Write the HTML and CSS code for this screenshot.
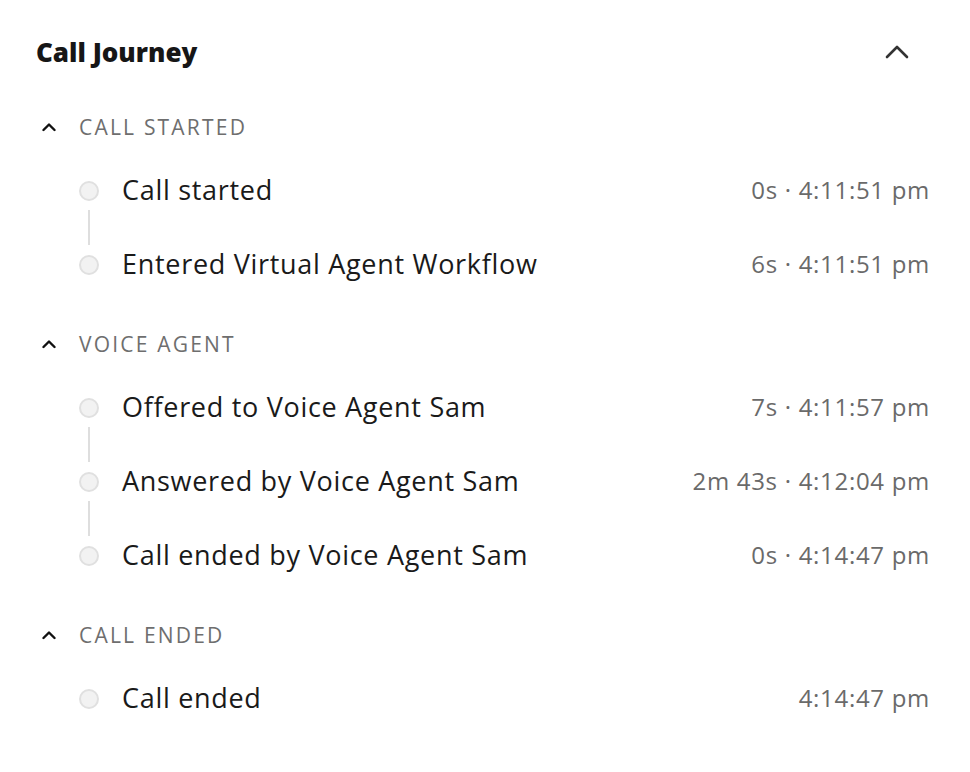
FILE: index.html
```html
<!DOCTYPE html>
<html lang="en">
<head>
  <meta charset="UTF-8" />
  <title>Call Journey</title>
  <link rel="stylesheet" href="styles.css">
</head>
<body>
<div class="journey">
  <div class="journey-header">
    <h2>Call Journey</h2>
    <button class="collapse-btn" aria-label="Collapse">
      <svg width="24" height="14" viewBox="0 0 24 14"><polyline points="2,12 12,2 22,12" fill="none" stroke="#333" stroke-width="2.6" stroke-linecap="round" stroke-linejoin="round"/></svg>
    </button>
  </div>

  <!-- Call started -->
  <div class="section">
    <div class="section-title">
      <svg class="chev" width="14" height="10" viewBox="0 0 14 10"><polyline points="1.5,8 7,2.5 12.5,8" fill="none" stroke="#111" stroke-width="2.4" stroke-linecap="round" stroke-linejoin="round"/></svg>
      <span>CALL STARTED</span>
    </div>
    <div class="event">
      <span class="dot"></span>
      <span class="event-name">Call started</span>
      <span class="event-time">0s · 4:11:51 pm</span>
    </div>
    <div class="event linked">
      <span class="dot"></span>
      <span class="event-name">Entered Virtual Agent Workflow</span>
      <span class="event-time">6s · 4:11:51 pm</span>
    </div>
  </div>

  <!-- Voice agent -->
  <div class="section">
    <div class="section-title">
      <svg class="chev" width="14" height="10" viewBox="0 0 14 10"><polyline points="1.5,8 7,2.5 12.5,8" fill="none" stroke="#111" stroke-width="2.4" stroke-linecap="round" stroke-linejoin="round"/></svg>
      <span>VOICE AGENT</span>
    </div>
    <div class="event">
      <span class="dot"></span>
      <span class="event-name">Offered to Voice Agent Sam</span>
      <span class="event-time">7s · 4:11:57 pm</span>
    </div>
    <div class="event linked">
      <span class="dot"></span>
      <span class="event-name">Answered by Voice Agent Sam</span>
      <span class="event-time">2m 43s · 4:12:04 pm</span>
    </div>
    <div class="event linked">
      <span class="dot"></span>
      <span class="event-name">Call ended by Voice Agent Sam</span>
      <span class="event-time">0s · 4:14:47 pm</span>
    </div>
  </div>

  <!-- Call ended -->
  <div class="section">
    <div class="section-title">
      <svg class="chev" width="14" height="10" viewBox="0 0 14 10"><polyline points="1.5,8 7,2.5 12.5,8" fill="none" stroke="#111" stroke-width="2.4" stroke-linecap="round" stroke-linejoin="round"/></svg>
      <span>CALL ENDED</span>
    </div>
    <div class="event">
      <span class="dot"></span>
      <span class="event-name">Call ended</span>
      <span class="event-time">4:14:47 pm</span>
    </div>
  </div>
</div>
</body>
</html>
```

FILE: styles.css
```css
body {
  margin: 0;
  font-family: 'Open Sans', 'Noto Sans', sans-serif;
  background: #fff;
  color: #1a1a1a;
}
.journey {
  width: 970px;
  box-sizing: border-box;
  padding: 36px 40px 0 36px;
}
.journey-header {
  display: flex;
  justify-content: space-between;
  align-items: center;
  height: 32px;
}
.journey-header h2 {
  margin: 0;
  font-size: 26px;
  line-height: 32px;
  font-weight: 800;
  color: #161616;
  letter-spacing: 0;
}
.collapse-btn {
  background: none;
  border: none;
  padding: 0;
  margin-right: 21px;
  width: 24px;
  height: 14px;
  display: flex;
  cursor: pointer;
}
.section {
  margin-top: 47px;
}
.section + .section {
  margin-top: 30px;
}
.section-title {
  display: flex;
  align-items: center;
  height: 24px;
  margin-bottom: 15px;
  color: #6e6e6e;
  font-size: 21px;
  letter-spacing: 2.2px;
}
.section-title .chev {
  margin-left: 6px;
  margin-right: 23px;
}
.event {
  position: relative;
  display: flex;
  align-items: center;
  height: 74px;
  padding-left: 43px;
}
.dot {
  width: 16px;
  height: 16px;
  border-radius: 50%;
  background: #f2f2f2;
  border: 2px solid #e0e0e0;
  flex-shrink: 0;
}
.event.linked::before {
  content: "";
  position: absolute;
  left: 52px;
  top: -18px;
  width: 2px;
  height: 35px;
  background: #dedede;
}
.event-name {
  margin-left: 23px;
  margin-bottom: 3px;
  font-size: 27px;
  letter-spacing: 0.7px;
  flex: 1;
}
.event-time {
  margin-bottom: 3px;
  font-size: 24px;
  letter-spacing: 0.7px;
  color: #6a6a6a;
}
```
